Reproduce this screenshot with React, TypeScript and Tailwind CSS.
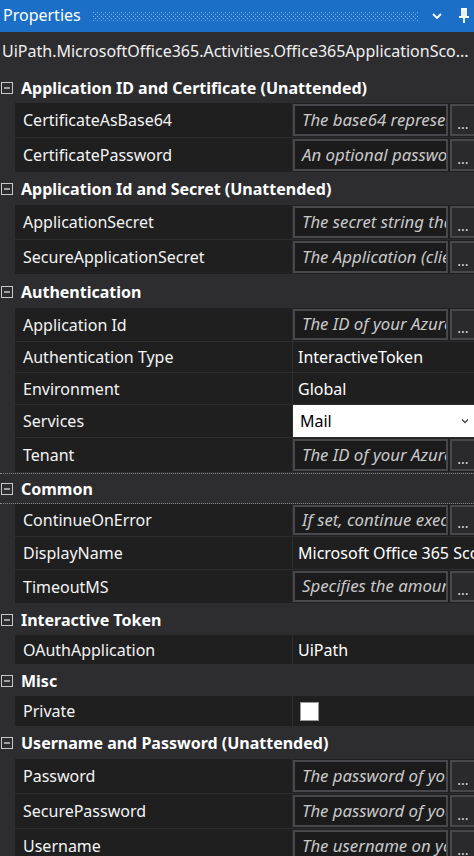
import React from "react";

type Prop = {
  name: string;
  kind: "box" | "text" | "select" | "check";
  value?: string;
  h: string;
};

type Category = {
  title: string;
  h: string;
  focused?: boolean;
  props: Prop[];
};

const categories: Category[] = [
  {
    title: "Application ID and Certificate (Unattended)",
    h: "h-[31px]",
    props: [
      { name: "CertificateAsBase64", kind: "box", value: "The base64 representation of the certificate", h: "h-[35px]" },
      { name: "CertificatePassword", kind: "box", value: "An optional password for the certificate", h: "h-[35px]" },
    ],
  },
  {
    title: "Application Id and Secret (Unattended)",
    h: "h-[32px]",
    props: [
      { name: "ApplicationSecret", kind: "box", value: "The secret string that the application uses", h: "h-[35px]" },
      { name: "SecureApplicationSecret", kind: "box", value: "The Application (client) secret", h: "h-[35px]" },
    ],
  },
  {
    title: "Authentication",
    h: "h-[33px]",
    props: [
      { name: "Application Id", kind: "box", value: "The ID of your Azure application", h: "h-[34px]" },
      { name: "Authentication Type", kind: "text", value: "InteractiveToken", h: "h-[31px]" },
      { name: "Environment", kind: "text", value: "Global", h: "h-[32px]" },
      { name: "Services", kind: "select", value: "Mail", h: "h-[33px]" },
      { name: "Tenant", kind: "box", value: "The ID of your Azure tenant", h: "h-[35px]" },
    ],
  },
  {
    title: "Common",
    h: "h-[31px]",
    focused: true,
    props: [
      { name: "ContinueOnError", kind: "box", value: "If set, continue executing the remaining activities", h: "h-[33px]" },
      { name: "DisplayName", kind: "text", value: "Microsoft Office 365 Scope", h: "h-[33px]" },
      { name: "TimeoutMS", kind: "box", value: "Specifies the amount of time", h: "h-[34px]" },
    ],
  },
  {
    title: "Interactive Token",
    h: "h-[31px]",
    props: [{ name: "OAuthApplication", kind: "text", value: "UiPath", h: "h-[30px]" }],
  },
  {
    title: "Misc",
    h: "h-[31px]",
    props: [{ name: "Private", kind: "check", h: "h-[31px]" }],
  },
  {
    title: "Username and Password (Unattended)",
    h: "h-[32px]",
    props: [
      { name: "Password", kind: "box", value: "The password of your account", h: "h-[35px]" },
      { name: "SecurePassword", kind: "box", value: "The password of your account", h: "h-[35px]" },
      { name: "Username", kind: "box", value: "The username on your account", h: "h-[35px]" },
    ],
  },
];

function CollapseIcon() {
  return (
    <svg width="12" height="12" viewBox="0 0 12 12" className="shrink-0">
      <rect x="0.5" y="0.5" width="11" height="11" fill="#2d2d30" stroke="#c8c8c8" />
      <line x1="3" y1="6" x2="9" y2="6" stroke="#e0e0e0" strokeWidth="1.3" />
    </svg>
  );
}

function ValueCell({ prop }: { prop: Prop }) {
  if (prop.kind === "box") {
    return (
      <div className="flex h-full flex-1 items-stretch gap-[2px] py-px">
        <div className="flex w-[155px] shrink-0 items-center overflow-hidden whitespace-nowrap border-2 border-[#48484c] bg-[#1b1b1c] pl-[7px] text-[16.8px] italic text-[#c9c9c9]">
          {prop.value}
        </div>
        <div className="flex flex-1 items-end justify-center border-2 border-r-0 border-[#48484c] bg-[#2a2a2c] pb-[3px] text-[14px] leading-none text-[#dcdcdc]">
          ...
        </div>
      </div>
    );
  }
  if (prop.kind === "select") {
    return (
      <div className="flex h-full flex-1 items-center justify-between bg-white pl-[7px] pr-[4px] text-black">
        <span>{prop.value}</span>
        <svg width="10" height="10" viewBox="0 0 10 10">
          <path d="M2 3.5 L5 6.5 L8 3.5" fill="none" stroke="#444" strokeWidth="1.3" />
        </svg>
      </div>
    );
  }
  if (prop.kind === "check") {
    return (
      <div className="flex h-full flex-1 items-center pl-[7px]">
        <div className="h-[19px] w-[19px] border border-[#999] bg-white" />
      </div>
    );
  }
  return (
    <div className="flex h-full flex-1 items-center overflow-hidden whitespace-nowrap pl-[5px] text-white">
      {prop.value}
    </div>
  );
}

function PropertyRow({ prop }: { prop: Prop }) {
  return (
    <div className={`flex pb-px ${prop.h}`}>
      <div className="w-[15px] shrink-0" />
      <div className="flex w-[277px] shrink-0 items-center bg-[#1f1f20] pl-[8px] text-[#f4f4f4]">
        {prop.name}
      </div>
      <div className="ml-px flex flex-1 bg-[#1f1f20]">
        <ValueCell prop={prop} />
      </div>
    </div>
  );
}

function CategoryBlock({ cat }: { cat: Category }) {
  return (
    <div>
      <div
        className={`flex items-center gap-[8px] pl-px font-bold text-white ${cat.h} ${
          cat.focused ? "border-y border-dotted border-[#8a8a8a]" : ""
        }`}
      >
        <CollapseIcon />
        <span>{cat.title}</span>
      </div>
      {cat.props.map((p) => (
        <PropertyRow key={p.name} prop={p} />
      ))}
    </div>
  );
}

export default function App() {
  return (
    <div className="h-[856px] w-[474px] overflow-hidden bg-[#2d2d30] font-['Noto_Sans',sans-serif] text-[16px] leading-none">
      {/* Title bar */}
      <div className="flex h-[32px] items-center bg-[#1c6fc6] pl-[3px] pr-[4px] text-white">
        <span className="pb-[2px] text-[16px]">Properties</span>
        <svg className="ml-[12px] mt-[2px] h-[10px] flex-1" preserveAspectRatio="none">
          <defs>
            <pattern id="grip" width="4" height="4" patternUnits="userSpaceOnUse">
              <rect x="0" y="0" width="1" height="1" fill="#7ab2ea" />
              <rect x="2" y="2" width="1" height="1" fill="#7ab2ea" />
            </pattern>
          </defs>
          <rect x="0" y="0" width="100%" height="100%" fill="url(#grip)" />
        </svg>
        <svg width="14" height="14" viewBox="0 0 14 14" className="ml-[12px]">
          <path d="M3 5 L7 9 L11 5" fill="none" stroke="white" strokeWidth="1.8" />
        </svg>
        <svg width="12" height="16" viewBox="0 0 12 16" className="ml-[14px]">
          <path d="M3 1 H9 M4 1 V9 M8 1 V9 M6 1 V9 M1 9 H11 M6 9 V15" fill="none" stroke="white" strokeWidth="1.8" />
        </svg>
      </div>

      {/* Selected object */}
      <div className="flex h-[40px] items-center overflow-hidden whitespace-nowrap pl-[2px] pb-[2px] text-[#f0f0f0]">
        UiPath.MicrosoftOffice365.Activities.Office365ApplicationSco...
      </div>

      {categories.map((c) => (
        <CategoryBlock key={c.title} cat={c} />
      ))}
    </div>
  );
}
